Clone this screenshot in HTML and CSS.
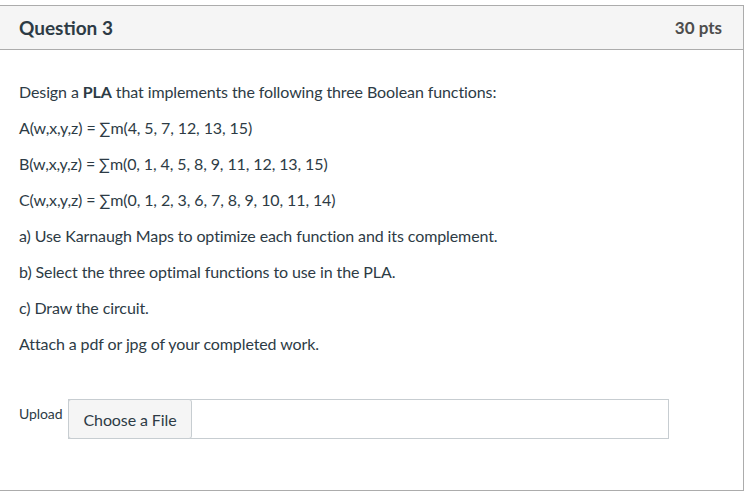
FILE: index.html
```html
<!DOCTYPE html>
<html lang="en">
<head>
<meta charset="utf-8">
<title>Question 3</title>
<link rel="stylesheet" href="styles.css">
</head>
<body>
<div class="card">
  <div class="card-header">
    <h2 class="title">Question 3</h2>
    <span class="points">30 pts</span>
  </div>
  <div class="card-body">
    <p>Design a <strong>PLA</strong> that implements the following three Boolean functions:</p>
    <p>A(w,x,y,z) = &sum;m(4, 5, 7, 12, 13, 15)</p>
    <p>B(w,x,y,z) = &sum;m(0, 1, 4, 5, 8, 9, 11, 12, 13, 15)</p>
    <p>C(w,x,y,z) = &sum;m(0, 1, 2, 3, 6, 7, 8, 9, 10, 11, 14)</p>
    <p>a) Use Karnaugh Maps to optimize each function and its complement.</p>
    <p>b) Select the three optimal functions to use in the PLA.</p>
    <p>c) Draw the circuit.</p>
    <p>Attach a pdf or jpg of your completed work.</p>
    <div class="upload">
      <span class="upload-label">Upload</span>
      <div class="file-box">
        <span class="file-btn">Choose a File</span>
      </div>
    </div>
  </div>
</div>
</body>
</html>
```

FILE: styles.css
```css
html, body {
  margin: 0;
  padding: 0;
  background: #ffffff;
}
body {
  padding: 5px 2px 0 0;
  font-family: Lato, "Open Sans", "Liberation Sans", sans-serif;
  color: #2d3b45;
}
.card {
  border: 1px solid #acacac;
  border-left: 0;
  height: 486px;
  box-sizing: border-box;
  display: flex;
  flex-direction: column;
}
.card-header {
  height: 43px;
  background: #f5f5f5;
  border-bottom: 1px solid #acacac;
  display: flex;
  align-items: center;
  justify-content: space-between;
  padding: 0 21px 0 19px;
}
.title {
  margin: 0;
  font-size: 19px;
  font-weight: 700;
  color: #2d3b45;
}
.points {
  font-size: 17px;
  font-weight: 700;
  color: #4d4d4d;
}
.card-body {
  padding: 31px 19px 0 19px;
  font-size: 16px;
  line-height: 21px;
  letter-spacing: -0.1px;
}
.card-body p {
  margin: 0 0 15px 0;
}
.card-body strong {
  font-weight: 700;
}
.upload {
  display: flex;
  align-items: flex-start;
  margin-top: 45px;
}
.upload-label {
  font-size: 14px;
  line-height: 18px;
  margin-top: 6px;
  width: 49px;
  flex: none;
}
.file-box {
  width: 601px;
  height: 40px;
  box-sizing: border-box;
  border: 1px solid #c7cdd1;
  display: flex;
}
.file-btn {
  margin: -1px 0 -1px -1px;
  width: 124px;
  box-sizing: border-box;
  background: #f5f5f5;
  border: 1px solid #c7cdd1;
  border-radius: 3px;
  display: flex;
  align-items: center;
  justify-content: center;
  font-size: 16px;
  color: #2d3b45;
}
```
